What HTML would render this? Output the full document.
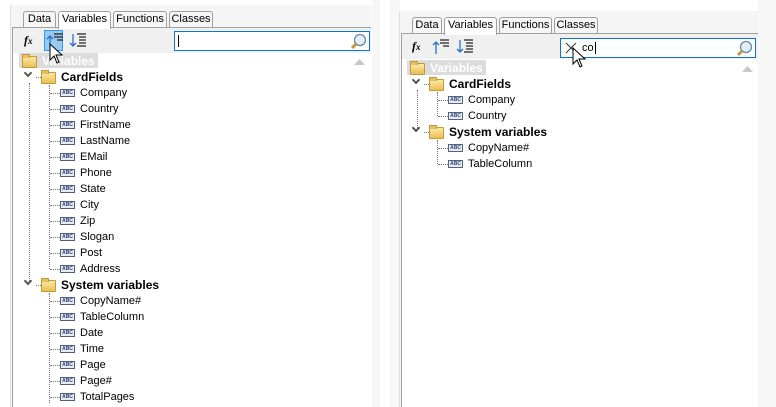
<!DOCTYPE html>
<html style="width:776px;height:407px;overflow:hidden"><head><meta charset="utf-8"><style>
*{margin:0;padding:0;box-sizing:border-box}
html,body{width:776px;height:407px;overflow:hidden}
body{background:#fff;font-family:Tahoma,"Liberation Sans",sans-serif;font-size:11px;color:#000}
#root{position:relative;width:776px;height:407px;overflow:hidden}
.g{position:absolute;background:#f7f7f7}
.panel{position:absolute;width:361px;background:#f7f7f7;border-left:1px solid #e0e0e0;overflow:hidden}
.tabs{position:absolute;left:0;top:0;width:100%;height:22px;background:#f5f5f5}
.tab{position:absolute;top:6px;height:17px;border:1px solid #a0a0a0;border-bottom:none;background:#f6f6f6;padding:1px 0 0 0;text-align:center;border-radius:3px 3px 0 0}
.tab.sel{background:#fff;height:18px;z-index:2}
.body{position:absolute;left:1px;top:22px;right:0;bottom:0;background:#fff;border-top:1px solid #a0a0a0;border-left:1px solid #a0a0a0;overflow:hidden}
.tool{position:absolute;left:0;top:0;right:0;height:25px;background:#f0f0f0}
.search{position:absolute;top:3px;width:196px;height:20px;border:1px solid #0a74d0;background:#fff}
.row{position:absolute;height:16px;line-height:16px;white-space:nowrap}
.b{font-weight:bold;font-size:12px}
.abc{position:absolute;width:15px;height:8px;border:1px solid #50607e;background:#e8ecf4;font-size:5px;line-height:6px;color:#304070;text-align:center;font-weight:bold}
.fold{position:absolute;width:15px;height:12px;background:linear-gradient(#fbe9a8,#e9bf52);border:1px solid #c49a35;border-radius:1px}
.fold::before{content:"";position:absolute;left:-1px;top:-3px;width:6px;height:3px;background:#e8c060;border:1px solid #c49a35;border-bottom:none}
.vl{position:absolute;width:0;border-left:1px dotted #777}
.hl{position:absolute;height:0;border-top:1px dotted #777}
.chev{position:absolute;width:6px;height:6px;border-right:2px solid #555;border-bottom:2px solid #555;transform:rotate(45deg)}
</style></head><body><div id="root">
<div class="g" style="left:372px;top:0;width:8px;height:407px"></div>
<div class="g" style="left:390px;top:0;width:10px;height:407px"></div>
<div class="g" style="left:758px;top:0;width:18px;height:407px"></div>

<!-- LEFT PANEL -->
<div class="panel" style="left:10px;top:5px;height:402px">
 <div class="tabs"></div>
 <div class="tab" style="left:12px;width:33px">Data</div>
 <div class="tab sel" style="left:47px;width:53px">Variables</div>
 <div class="tab" style="left:102px;width:54px">Functions</div>
 <div class="tab" style="left:158px;width:44px">Classes</div>
 <div class="body">
  <div class="tool">
   <div style="position:absolute;left:11px;top:5px;font-family:'Liberation Serif',serif;font-style:italic;font-weight:bold;font-size:12px">f<span style="font-size:9px">x</span></div>
   <div style="position:absolute;left:31px;top:2px;width:19px;height:21px;background:#99c9ef;border:1px solid #3399ff"></div>
   <svg style="position:absolute;left:33px;top:4px" width="18" height="18"><path d="M4 16V4M1 7l3-3 3 3" stroke="#2a70c8" stroke-width="1.3" fill="none"/><path d="M8 2h9M8 5h9M11 8h6" stroke="#222" stroke-width="1.2"/></svg>
   <svg style="position:absolute;left:56px;top:4px" width="18" height="18"><path d="M4 2v12M1 11l3 3 3-3" stroke="#2a70c8" stroke-width="1.3" fill="none"/><path d="M8 2h9M10 5h7M10 8h7M10 11h7M8 14h9" stroke="#222" stroke-width="1.2"/></svg>
   <div class="search" style="left:161px">
    <div style="position:absolute;left:3px;top:3px;width:1px;height:12px;background:#000"></div>
    <svg style="position:absolute;right:2px;top:1px" width="17" height="17"><circle cx="10" cy="7" r="5.5" fill="#e4eef8" stroke="#6a8aa8" stroke-width="1.3"/><path d="M6 11l-4 4" stroke="#c89a30" stroke-width="3"/></svg>
   </div>
  </div>
  <div style="position:absolute;left:6px;top:25px;width:79px;height:15px;background:#dcdcdc"></div>
  <div class="fold" style="left:9px;top:28px"></div>
  <div class="row b" style="left:29px;top:25px;color:#fff">Variables</div>
  <svg style="position:absolute;left:341px;top:31px" width="11" height="7"><path d="M0 6L5.5 0 11 6z" fill="#c8c8c8"/></svg>

  <div class="vl" style="left:16px;top:55px;height:198px"></div>
  <div class="chev" style="left:12px;top:42px"></div>
  <div class="hl" style="left:23px;top:49px;width:5px"></div>
  <div class="fold" style="left:28px;top:44px"></div>
  <div class="row b" style="left:48px;top:41px">CardFields</div>
  <div class="vl" style="left:36px;top:57px;height:184px"></div>

  <div class="chev" style="left:12px;top:250px"></div>
  <div class="hl" style="left:23px;top:257px;width:5px"></div>
  <div class="fold" style="left:28px;top:252px"></div>
  <div class="row b" style="left:48px;top:249px">System variables</div>
  <div class="vl" style="left:36px;top:265px;height:110px"></div>

  <div class="hl" style="left:37px;top:65px;width:10px"></div><div class="abc" style="left:47px;top:61px">ABC</div><div class="row" style="left:67px;top:57px">Company</div>
  <div class="hl" style="left:37px;top:81px;width:10px"></div><div class="abc" style="left:47px;top:77px">ABC</div><div class="row" style="left:67px;top:73px">Country</div>
  <div class="hl" style="left:37px;top:97px;width:10px"></div><div class="abc" style="left:47px;top:93px">ABC</div><div class="row" style="left:67px;top:89px">FirstName</div>
  <div class="hl" style="left:37px;top:113px;width:10px"></div><div class="abc" style="left:47px;top:109px">ABC</div><div class="row" style="left:67px;top:105px">LastName</div>
  <div class="hl" style="left:37px;top:129px;width:10px"></div><div class="abc" style="left:47px;top:125px">ABC</div><div class="row" style="left:67px;top:121px">EMail</div>
  <div class="hl" style="left:37px;top:145px;width:10px"></div><div class="abc" style="left:47px;top:141px">ABC</div><div class="row" style="left:67px;top:137px">Phone</div>
  <div class="hl" style="left:37px;top:161px;width:10px"></div><div class="abc" style="left:47px;top:157px">ABC</div><div class="row" style="left:67px;top:153px">State</div>
  <div class="hl" style="left:37px;top:177px;width:10px"></div><div class="abc" style="left:47px;top:173px">ABC</div><div class="row" style="left:67px;top:169px">City</div>
  <div class="hl" style="left:37px;top:193px;width:10px"></div><div class="abc" style="left:47px;top:189px">ABC</div><div class="row" style="left:67px;top:185px">Zip</div>
  <div class="hl" style="left:37px;top:209px;width:10px"></div><div class="abc" style="left:47px;top:205px">ABC</div><div class="row" style="left:67px;top:201px">Slogan</div>
  <div class="hl" style="left:37px;top:225px;width:10px"></div><div class="abc" style="left:47px;top:221px">ABC</div><div class="row" style="left:67px;top:217px">Post</div>
  <div class="hl" style="left:37px;top:241px;width:10px"></div><div class="abc" style="left:47px;top:237px">ABC</div><div class="row" style="left:67px;top:233px">Address</div>
  <div class="hl" style="left:37px;top:273px;width:10px"></div><div class="abc" style="left:47px;top:269px">ABC</div><div class="row" style="left:67px;top:265px">CopyName#</div>
  <div class="hl" style="left:37px;top:289px;width:10px"></div><div class="abc" style="left:47px;top:285px">ABC</div><div class="row" style="left:67px;top:281px">TableColumn</div>
  <div class="hl" style="left:37px;top:305px;width:10px"></div><div class="abc" style="left:47px;top:301px">ABC</div><div class="row" style="left:67px;top:297px">Date</div>
  <div class="hl" style="left:37px;top:321px;width:10px"></div><div class="abc" style="left:47px;top:317px">ABC</div><div class="row" style="left:67px;top:313px">Time</div>
  <div class="hl" style="left:37px;top:337px;width:10px"></div><div class="abc" style="left:47px;top:333px">ABC</div><div class="row" style="left:67px;top:329px">Page</div>
  <div class="hl" style="left:37px;top:353px;width:10px"></div><div class="abc" style="left:47px;top:349px">ABC</div><div class="row" style="left:67px;top:345px">Page#</div>
  <div class="hl" style="left:37px;top:369px;width:10px"></div><div class="abc" style="left:47px;top:365px">ABC</div><div class="row" style="left:67px;top:361px">TotalPages</div>
 </div>
</div>

<!-- RIGHT PANEL -->
<div class="panel" style="left:399px;top:11px;width:359px;height:396px">
 <div class="tabs"></div>
 <div class="tab" style="left:12px;width:30px">Data</div>
 <div class="tab sel" style="left:44px;width:53px">Variables</div>
 <div class="tab" style="left:99px;width:53px">Functions</div>
 <div class="tab" style="left:154px;width:44px">Classes</div>
 <div class="body">
  <div class="tool">
   <div style="position:absolute;left:10px;top:5px;font-family:'Liberation Serif',serif;font-style:italic;font-weight:bold;font-size:12px">f<span style="font-size:9px">x</span></div>
   <svg style="position:absolute;left:30px;top:4px" width="18" height="18"><path d="M4 16V4M1 7l3-3 3 3" stroke="#2a70c8" stroke-width="1.3" fill="none"/><path d="M8 2h9M8 5h9M11 8h6" stroke="#222" stroke-width="1.2"/></svg>
   <svg style="position:absolute;left:54px;top:4px" width="18" height="18"><path d="M4 2v12M1 11l3 3 3-3" stroke="#2a70c8" stroke-width="1.3" fill="none"/><path d="M8 2h9M10 5h7M10 8h7M10 11h7M8 14h9" stroke="#222" stroke-width="1.2"/></svg>
   <div class="search" style="left:158px;top:4px">
    <svg style="position:absolute;left:4px;top:3px" width="12" height="12"><path d="M1 1l10 10M11 1L1 11" stroke="#333" stroke-width="1"/></svg>
    <div style="position:absolute;left:21px;top:1px;line-height:16px">co</div>
    <div style="position:absolute;left:34px;top:3px;width:1px;height:12px;background:#000"></div>
    <svg style="position:absolute;right:2px;top:1px" width="17" height="17"><circle cx="10" cy="7" r="5.5" fill="#e4eef8" stroke="#6a8aa8" stroke-width="1.3"/><path d="M6 11l-4 4" stroke="#c89a30" stroke-width="3"/></svg>
   </div>
  </div>
  <div style="position:absolute;left:5px;top:26px;width:79px;height:15px;background:#dcdcdc"></div>
  <div class="fold" style="left:8px;top:29px"></div>
  <div class="row b" style="left:28px;top:26px;color:#fff">Variables</div>
  <svg style="position:absolute;left:340px;top:32px" width="11" height="7"><path d="M0 6L5.5 0 11 6z" fill="#c8c8c8"/></svg>

  <div class="vl" style="left:15px;top:56px;height:40px"></div>
  <div class="chev" style="left:11px;top:43px"></div>
  <div class="hl" style="left:22px;top:50px;width:5px"></div>
  <div class="fold" style="left:27px;top:45px"></div>
  <div class="row b" style="left:47px;top:42px">CardFields</div>
  <div class="vl" style="left:35px;top:58px;height:24px"></div>
  <div class="hl" style="left:36px;top:66px;width:10px"></div><div class="abc" style="left:46px;top:62px">ABC</div><div class="row" style="left:66px;top:58px">Company</div>
  <div class="hl" style="left:36px;top:82px;width:10px"></div><div class="abc" style="left:46px;top:78px">ABC</div><div class="row" style="left:66px;top:74px">Country</div>

  <div class="chev" style="left:11px;top:91px"></div>
  <div class="hl" style="left:22px;top:98px;width:5px"></div>
  <div class="fold" style="left:27px;top:93px"></div>
  <div class="row b" style="left:47px;top:90px">System variables</div>
  <div class="vl" style="left:35px;top:106px;height:24px"></div>
  <div class="hl" style="left:36px;top:114px;width:10px"></div><div class="abc" style="left:46px;top:110px">ABC</div><div class="row" style="left:66px;top:106px">CopyName#</div>
  <div class="hl" style="left:36px;top:130px;width:10px"></div><div class="abc" style="left:46px;top:126px">ABC</div><div class="row" style="left:66px;top:122px">TableColumn</div>
 </div>
</div>

<svg style="position:absolute;left:49px;top:43px" width="14" height="22"><path d="M1 1v16l4-4 3 7 2-1-3-7h6z" fill="#fff" stroke="#000" stroke-width="1"/></svg>
<svg style="position:absolute;left:572px;top:47px" width="14" height="22"><path d="M1 1v16l4-4 3 7 2-1-3-7h6z" fill="#fff" stroke="#000" stroke-width="1"/></svg>
</div></body></html>
